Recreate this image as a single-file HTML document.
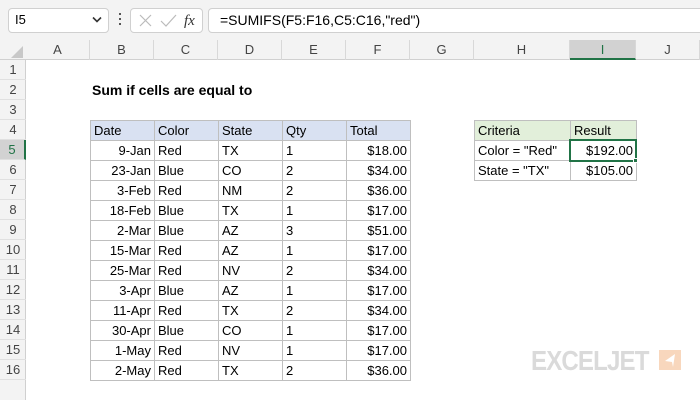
<!DOCTYPE html><html><head><style>
body{margin:0;width:700px;height:400px;overflow:hidden;background:#fff;font-family:"Liberation Sans",sans-serif;position:relative}
.a{position:absolute;box-sizing:border-box}
.t{font-size:13px;line-height:20px;white-space:nowrap;color:#000}
.ch{font-size:13px;color:#444;text-align:center;line-height:20px}
</style></head><body>
<div class="a" style="left:0;top:0;width:700px;height:40px;background:#f3f3f3"></div>
<div class="a" style="left:8px;top:8px;width:101px;height:25px;background:#fff;border:1px solid #d0d0d0;border-radius:4px"></div>
<div class="a t" style="left:15px;top:10px">I5</div>
<svg class="a" style="left:92px;top:16px" width="10" height="8"><path d="M1 1.5L5 5.5L9 1.5" stroke="#333" stroke-width="1.6" fill="none"/></svg>
<div class="a" style="left:119px;top:13px;width:2px;height:2px;background:#555;box-shadow:0 5px #555,0 10px #555"></div>
<div class="a" style="left:130px;top:8px;width:73px;height:25px;background:#fff;border:1px solid #d0d0d0;border-radius:4px"></div>
<svg class="a" style="left:138px;top:14px" width="60" height="14"><path d="M2 1L13 12M13 1L2 12" stroke="#bbb" stroke-width="1.2"/><path d="M23 7L28 12L38 1" stroke="#bbb" stroke-width="1.2" fill="none"/><text x="46" y="11" font-family="Liberation Serif" font-style="italic" font-size="15" fill="#333">fx</text></svg>
<div class="a" style="left:208px;top:8px;width:500px;height:25px;background:#fff;border:1px solid #d0d0d0;border-radius:4px"></div>
<div class="a t" style="left:220px;top:10px;font-size:14px">=SUMIFS(F5:F16,C5:C16,"red")</div>
<div class="a" style="left:0;top:40px;width:700px;height:20px;background:#f3f3f3;border-bottom:1px solid #d0d0d0"></div>
<div class="a" style="left:0;top:60px;width:26px;height:340px;background:#f3f3f3;border-right:1px solid #d0d0d0"></div>
<svg class="a" style="left:10px;top:45px" width="14" height="14"><path d="M13 1L13 13L1 13Z" fill="#c8c8c8"/></svg>
<div id="cols"></div><div id="rows"></div><div id="cells"></div>
<div class="a t" style="left:92px;top:80px;font-weight:bold;font-size:14px">Sum if cells are equal to</div>
<div class="a" style="left:531px;top:347px;font:bold 28px/28px 'Liberation Sans',sans-serif;color:#dadada;letter-spacing:-1px;transform:scaleX(0.86);transform-origin:0 0;white-space:nowrap">EXCELJET</div>
<div class="a" style="left:659px;top:350px;width:22px;height:20px;background:#f8d7bd"></div>
<svg class="a" style="left:659px;top:350px" width="22" height="20"><path d="M16 4L6 11L13 12L14 17Z" fill="#fff"/></svg>
<script>
var cx=[26,90,154,218,282,346,410,474,570,636,700],L="ABCDEFGHIJ",h="";
for(var i=0;i<10;i++){var sel=i==8;h+='<div class="a ch" style="left:'+cx[i]+'px;top:40px;width:'+(cx[i+1]-cx[i])+'px;height:20px;border-right:1px solid #d8d8d8;'+(sel?'background:#d2d2d2;border-bottom:2px solid #217346;color:#217346':'')+'">'+L[i]+'</div>';}
document.getElementById('cols').innerHTML=h;h="";
for(var r=1;r<=16;r++){var sel=r==5;h+='<div class="a ch" style="left:0;top:'+(40+r*20)+'px;width:26px;height:20px;border-bottom:1px solid #e0e0e0;'+(sel?'background:#d2d2d2;border-right:2px solid #217346;color:#217346':'')+'">'+r+'</div>';}
document.getElementById('rows').innerHTML=h;h="";
var d=[["9-Jan","Red","TX","1","$18.00"],["23-Jan","Blue","CO","2","$34.00"],["3-Feb","Red","NM","2","$36.00"],["18-Feb","Blue","TX","1","$17.00"],["2-Mar","Blue","AZ","3","$51.00"],["15-Mar","Red","AZ","1","$17.00"],["25-Mar","Red","NV","2","$34.00"],["3-Apr","Blue","AZ","1","$17.00"],["11-Apr","Red","TX","2","$34.00"],["30-Apr","Blue","CO","1","$17.00"],["1-May","Red","NV","1","$17.00"],["2-May","Red","TX","2","$36.00"]];
function cell(x,y,w,t,bg,al){return '<div class="a t" style="left:'+x+'px;top:'+y+'px;width:'+(w+1)+'px;height:21px;border:1px solid #bfbfbf;padding:0 3px;background:'+(bg||'#fff')+';text-align:'+(al||'left')+'">'+t+'</div>';}
var hd=["Date","Color","State","Qty","Total"];
for(var c=0;c<5;c++)h+=cell(cx[1+c],120,64,hd[c],'#d9e1f2');
for(var r=0;r<12;r++)for(var c=0;c<5;c++)h+=cell(cx[1+c],140+r*20,64,d[r][c],0,(c==0||c==4)?'right':'left');
h+=cell(474,120,96,"Criteria",'#e2efda');h+=cell(570,120,66,"Result",'#e2efda');
h+=cell(474,140,96,'Color = "Red"');h+=cell(570,140,66,'$192.00',0,'right');
h+=cell(474,160,96,'State = "TX"');h+=cell(570,160,66,'$105.00',0,'right');
h+='<div class="a" style="left:569px;top:139px;width:68px;height:23px;border:2px solid #217346"></div><div class="a" style="left:633px;top:158px;width:5px;height:5px;background:#217346;border:1px solid #fff"></div>';
document.getElementById('cells').innerHTML=h;
</script></body></html>
